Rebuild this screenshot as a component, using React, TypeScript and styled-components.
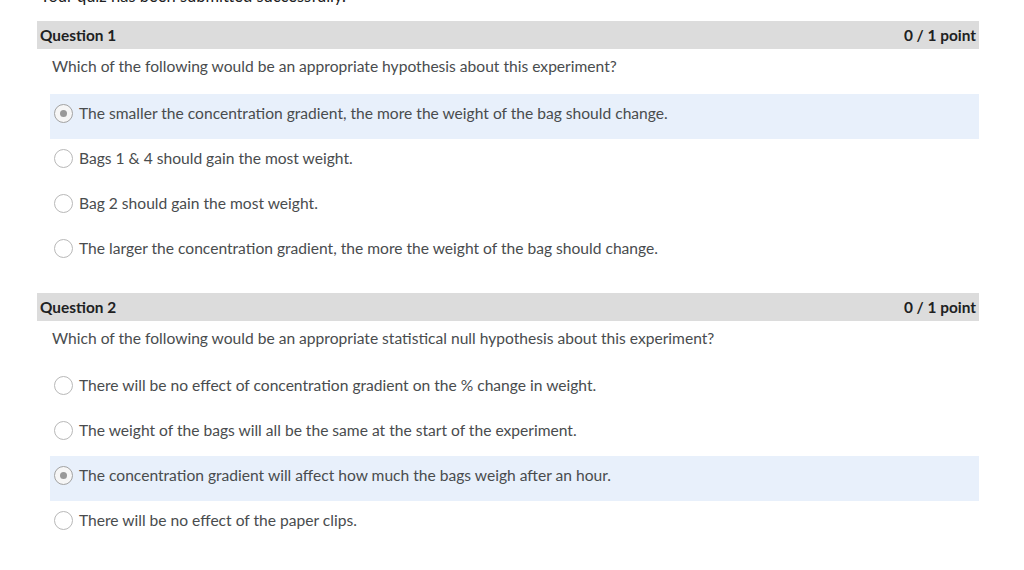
import styled, { createGlobalStyle } from 'styled-components';

const GlobalStyle = createGlobalStyle`
  html, body {
    margin: 0;
    padding: 0;
    background: #ffffff;
    overflow: hidden;
  }
  body {
    font-family: Lato, "Liberation Sans", sans-serif;
  }
`

interface IQuestion {
  title: string;
  score: string;
  prompt: string;
  options: string[];
  selected: number;
}

const questions: IQuestion[] = [
  {
    title: 'Question 1',
    score: '0 / 1 point',
    prompt: 'Which of the following would be an appropriate hypothesis about this experiment?',
    options: [
      'The smaller the concentration gradient, the more the weight of the bag should change.',
      'Bags 1 & 4 should gain the most weight.',
      'Bag 2 should gain the most weight.',
      'The larger the concentration gradient, the more the weight of the bag should change.',
    ],
    selected: 0,
  },
  {
    title: 'Question 2',
    score: '0 / 1 point',
    prompt: 'Which of the following would be an appropriate statistical null hypothesis about this experiment?',
    options: [
      'There will be no effect of concentration gradient on the % change in weight.',
      'The weight of the bags will all be the same at the start of the experiment.',
      'The concentration gradient will affect how much the bags weigh after an hour.',
      'There will be no effect of the paper clips.',
    ],
    selected: 2,
  },
]

const Page = styled.div`
  width: 942px;
  padding-left: 37px;
`

// only the bottom of this line peeks in at the top of the page
const Notice = styled.div`
  margin: -14px 0 15px 3px;
  font-size: 16.5px;
  line-height: 20px;
  color: #202122;
`

const Section = styled.section`
  margin-bottom: 19px;
`

const Header = styled.div`
  height: 28px;
  padding: 0 3px;
  display: flex;
  align-items: center;
  justify-content: space-between;
  background: #dcdcdc;
  color: #202122;
  font-size: 15.4px;
  font-weight: 700;
`

const Prompt = styled.div`
  box-sizing: border-box;
  height: 45px;
  padding: 7px 0 0 15px;
  font-size: 15.6px;
  line-height: 20px;
  color: #494c4e;
`

const Option = styled.div<{ $selected?: boolean }>`
  box-sizing: border-box;
  height: 45px;
  margin-left: 13px;
  padding: 0 0 7px 4px;
  display: flex;
  align-items: center;
  gap: 6px;
  background: ${(p) => (p.$selected ? '#e8f0fb' : 'transparent')};
  font-size: 15.6px;
  line-height: 20px;
  color: #494c4e;
`

const Radio = styled.span<{ $checked?: boolean }>`
  box-sizing: border-box;
  width: 19px;
  height: 19px;
  flex: none;
  border-radius: 50%;
  border: 1px solid ${(p) => (p.$checked ? '#a2a2a2' : '#b8b8b8')};
  background: ${(p) => (p.$checked ? '#f6f6f6' : '#ffffff')};
  display: flex;
  align-items: center;
  justify-content: center;

  &::after {
    content: '';
    display: ${(p) => (p.$checked ? 'block' : 'none')};
    width: 7px;
    height: 7px;
    border-radius: 50%;
    background: #999999;
  }
`

const App: React.FC = () => {
  return (
    <>
      <GlobalStyle />
      <Page>
        <Notice>Your quiz has been submitted successfully.</Notice>
        {questions.map((q) => (
          <Section key={q.title}>
            <Header>
              <span>{q.title}</span>
              <span>{q.score}</span>
            </Header>
            <Prompt>{q.prompt}</Prompt>
            {q.options.map((opt, i) => (
              <Option key={opt} $selected={i === q.selected}>
                <Radio $checked={i === q.selected} />
                <span>{opt}</span>
              </Option>
            ))}
          </Section>
        ))}
      </Page>
    </>
  )
}

export default App;
